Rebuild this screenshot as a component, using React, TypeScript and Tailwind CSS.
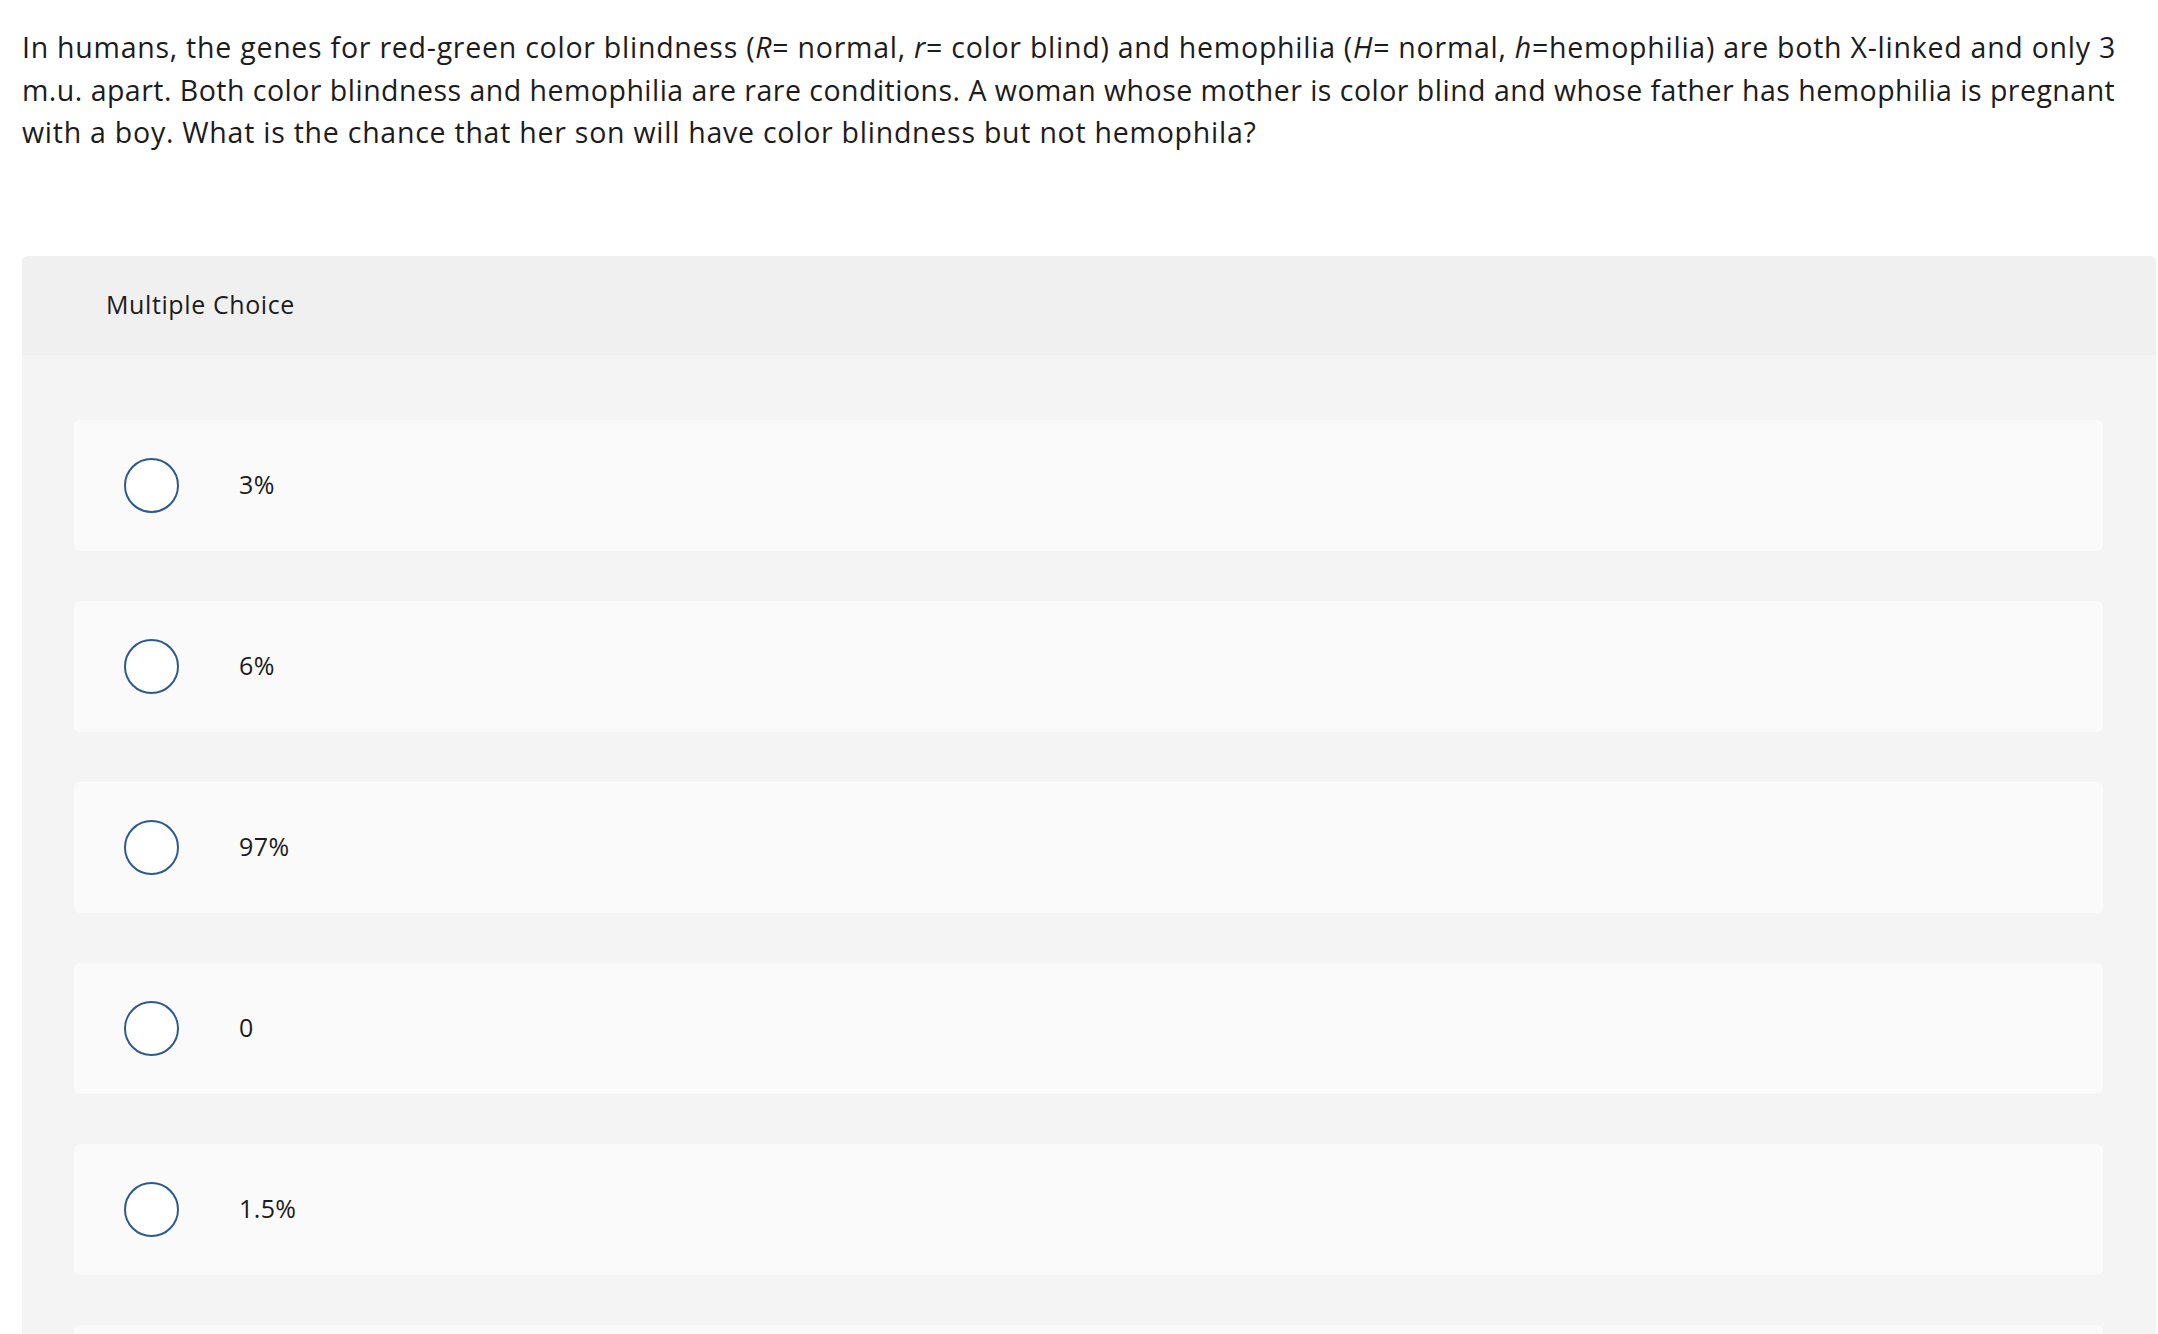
const options = ["3%", "6%", "97%", "0", "1.5%", "12%"];

function Option({ label }: { label: string }) {
  return (
    <div className="flex h-[131px] items-center rounded-md bg-[#fafafa] pl-[50px]">
      <span className="h-[55px] w-[55px] shrink-0 rounded-full border-2 border-[#2d5a8e] bg-white" />
      <span className="ml-[60px] text-[25px] tracking-[0.4px] text-[#1c1c1c]">{label}</span>
    </div>
  );
}

export default function App() {
  return (
    <div className="min-h-screen bg-white px-[22px] pt-[26px] font-['Open_Sans',sans-serif] text-[#1c1c1c]">
      <p className="whitespace-nowrap text-[28.5px] leading-[42.5px] tracking-[0.75px]">
        In humans, the genes for red-green color blindness (<i>R</i>= normal, <i>r</i>= color blind) and
        hemophilia (<i>H</i>= normal, <i>h</i>=hemophilia) are both X-linked and only 3
        <br />
        <span className="tracking-[0.48px]">
          m.u. apart. Both color blindness and hemophilia are rare conditions. A woman whose mother is color
          blind and whose father has hemophilia is pregnant
        </span>
        <br />
        with a boy. What is the chance that her son will have color blindness but not hemophila?
      </p>

      <div className="mt-[102px] -mr-[20px] overflow-hidden rounded-t-md bg-[#f4f4f4]">
        <div className="flex h-[99px] items-center bg-[#f0f0f0] pl-[84px] text-[25px] tracking-[0.6px]">
          Multiple Choice
        </div>
        <div className="flex flex-col gap-[50px] pl-[52px] pr-[53px] pt-[65px] pb-[50px]">
          {options.map((o) => (
            <Option key={o} label={o} />
          ))}
        </div>
      </div>
    </div>
  );
}
